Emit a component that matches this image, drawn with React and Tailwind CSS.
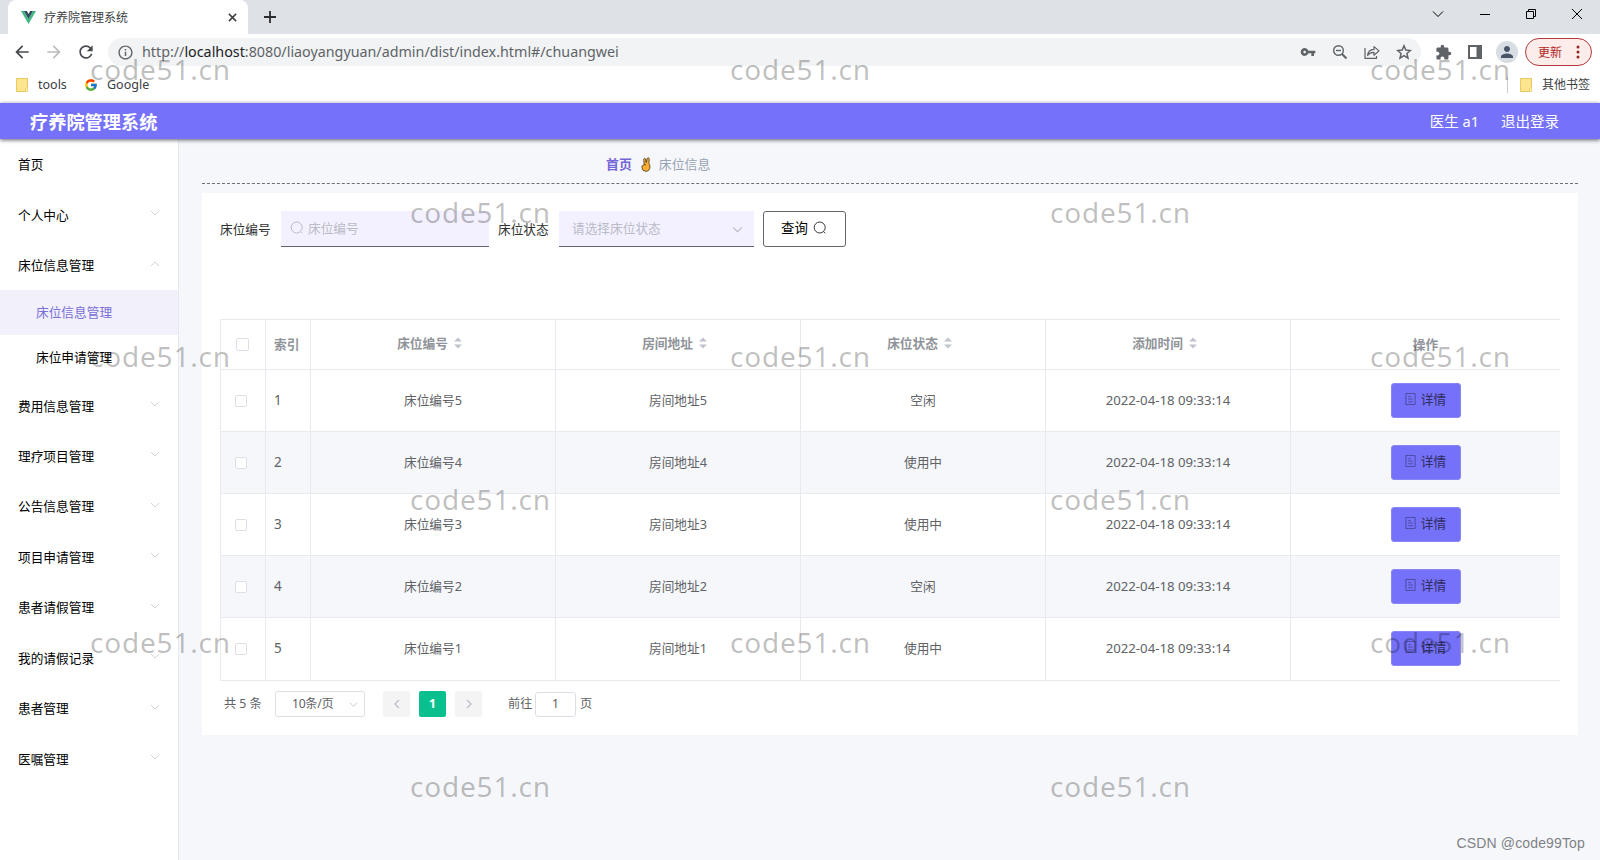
import { FcGoogle } from 'react-icons/fc'
import {
  MdArrowBack,
  MdArrowForward,
  MdExtension,
  MdInfoOutline,
  MdPerson,
  MdRefresh,
  MdVpnKey,
} from 'react-icons/md'

const menu = [
  { title: '首页' },
  { title: '个人中心', arrow: 'down' },
  { title: '床位信息管理', arrow: 'up', children: ['床位信息管理', '床位申请管理'] },
  { title: '费用信息管理', arrow: 'down' },
  { title: '理疗项目管理', arrow: 'down' },
  { title: '公告信息管理', arrow: 'down' },
  { title: '项目申请管理', arrow: 'down' },
  { title: '患者请假管理', arrow: 'down' },
  { title: '我的请假记录', arrow: 'down' },
  { title: '患者管理', arrow: 'down' },
  { title: '医嘱管理', arrow: 'down' },
]

const columns = ['床位编号', '房间地址', '床位状态', '添加时间']

const rows = [
  { bed: '床位编号5', room: '房间地址5', status: '空闲', time: '2022-04-18 09:33:14' },
  { bed: '床位编号4', room: '房间地址4', status: '使用中', time: '2022-04-18 09:33:14' },
  { bed: '床位编号3', room: '房间地址3', status: '使用中', time: '2022-04-18 09:33:14' },
  { bed: '床位编号2', room: '房间地址2', status: '空闲', time: '2022-04-18 09:33:14' },
  { bed: '床位编号1', room: '房间地址1', status: '使用中', time: '2022-04-18 09:33:14' },
]

const watermarks = [
  [90, 69], [730, 69], [1370, 69],
  [410, 212], [1050, 212],
  [90, 356], [730, 356], [1370, 356],
  [410, 499], [1050, 499],
  [90, 642], [730, 642], [1370, 642],
  [410, 786], [1050, 786],
]

function Chevron({ dir = 'down', className }) {
  const d = { down: 'M1 3l4 4 4-4', up: 'M1 7l4-4 4 4', left: 'M7 1L3 5l4 4', right: 'M3 1l4 4-4 4' }[dir]
  return (
    <svg viewBox="0 0 10 10" className={className} fill="none" stroke="currentColor">
      <path d={d} />
    </svg>
  )
}

function SearchIcon({ className }) {
  return (
    <svg viewBox="0 0 14 14" className={className} fill="none" stroke="currentColor">
      <circle cx="6.7" cy="6.5" r="5.5" />
      <path d="M10.500 10.600l1.700 1.700" />
    </svg>
  )
}

function Folder() {
  return (
    <svg viewBox="0 0 12 14" className="h-[14px] w-[12px] shrink-0">
      <path d="M.5.5h11v9l-1.5 4H.5z" fill="#ffe48f" stroke="#e9c85c" />
      <path d="M9.5 13.5v-3l2-1.5v4.5z" fill="#fff0b8" stroke="#e9c85c" strokeWidth=".7" />
    </svg>
  )
}

function TabStrip() {
  return (
    <div className="flex h-[34px] bg-[#dee1e6] pl-2">
      <div className="flex w-[240px] items-center rounded-t-lg bg-white pl-[13px] pr-[11px]">
        <svg viewBox="0 0 14 12" className="h-[13px] w-[15px]">
          <path d="M0 0h2.8L7 7.3 11.2 0H14L7 12z" fill="#41b883" />
          <path d="M2.8 0h2.6L7 2.8 8.6 0h2.6L7 7.3z" fill="#35495e" />
        </svg>
        <span className="ml-2 pt-px text-[12px] text-[#3c4043]">疗养院管理系统</span>
        <svg viewBox="0 0 10 10" className="ml-auto h-[9px] w-[9px]" stroke="#3c4043" strokeWidth="1.700">
          <path d="M1 1l8 8M9 1L1 9" />
        </svg>
      </div>
      <svg viewBox="0 0 12 12" className="ml-[16px] mt-[11px] h-3 w-3" stroke="#2b2d30" strokeWidth="1.800">
        <path d="M6 0v12M0 6h12" />
      </svg>
      <div className="ml-auto mr-[18px] flex h-[28px] items-center gap-[36px] text-black">
        <svg viewBox="0 0 12 10" className="h-[10px] w-[12px]" fill="none" stroke="currentColor">
          <path d="M1 2.5l5 5 5-5" />
        </svg>
        <svg viewBox="0 0 10 10" className="h-[10px] w-[10px]" stroke="currentColor">
          <path d="M0 5.5h10" />
        </svg>
        <svg viewBox="0 0 10 10" className="h-[10px] w-[10px]" fill="none" stroke="currentColor">
          <path d="M.5 2.5h7v7h-7zM2.5 2.5v-2h7v7h-2" />
        </svg>
        <svg viewBox="0 0 10 10" className="h-[10px] w-[10px]" stroke="currentColor">
          <path d="M0 0l10 10M10 0L0 10" />
        </svg>
      </div>
    </div>
  )
}

function Toolbar() {
  return (
    <div className="flex h-[36px] items-center pl-[12px] pr-[8px] text-[#5f6368]">
      <MdArrowBack className="h-5 w-5 text-[#45484c]" />
      <MdArrowForward className="ml-[12px] h-5 w-5 text-[#babcbe]" />
      <MdRefresh className="ml-[12px] h-5 w-5 text-[#45484c]" />
      <div className="ml-[12px] flex h-[28px] w-[1313px] items-center rounded-full bg-[#f1f3f4] pl-[9px] pr-[9px]">
        <MdInfoOutline className="h-[17px] w-[17px]" />
        <span className="ml-[8px] text-[14.3px] leading-[20px]">
          http://<span className="text-[#202124]">localhost</span>:8080/liaoyangyuan/admin/dist/index.html#/chuangwei
        </span>
        <div className="ml-auto flex items-center gap-[16px]">
          <MdVpnKey className="h-4 w-4" />
          <svg viewBox="0 0 16 16" className="h-4 w-4" fill="none" stroke="currentColor" strokeWidth="1.400">
            <circle cx="6.500" cy="6.500" r="4.800" />
            <path d="M4 6.500h5" />
            <path d="M10 10l4.500 4.500" strokeWidth="2" />
          </svg>
          <svg viewBox="0 0 16 16" className="h-4 w-4" fill="none" stroke="currentColor" strokeWidth="1.200">
            <path d="M1 4v10.400h11.500V12" />
            <path d="M3.600 11.500C4 7.500 6.300 5.600 10 5.400V2.600l5 4.300-5 4.300V8.400c-3-.1-4.800.8-6.400 3.100z" strokeLinejoin="round" />
          </svg>
          <svg viewBox="0 0 16 16" className="h-4 w-4" fill="none" stroke="currentColor" strokeWidth="1.500">
            <path d="M8 1.800l1.800 4.300 4.600.4-3.500 3 1.100 4.600L8 11.700l-4 2.400 1.100-4.600-3.500-3 4.600-.4z" />
          </svg>
        </div>
      </div>
      <MdExtension className="ml-[14px] h-[17px] w-[17px]" />
      <svg viewBox="0 0 14 14" className="ml-[16px] h-[14px] w-[14px]">
        <path d="M0 0h14v14H0zM2 2v10h6.500V2z" fill="currentColor" fillRule="evenodd" />
      </svg>
      <div className="ml-[14px] flex h-[22px] w-[22px] items-center justify-center rounded-full bg-[#d8dde4]">
        <MdPerson className="h-[18px] w-[18px] text-[#4a5468]" />
      </div>
      <div className="ml-auto flex h-[28px] w-[67px] items-center rounded-full border border-[#b3383a] bg-[#fcecea] pl-[12px] pr-[11px]">
        <span className="pt-px text-[12px] text-[#b3261e]">更新</span>
        <svg viewBox="0 0 4 14" className="ml-auto h-[14px] w-[4px]" fill="#8f2a26">
          <circle cx="2" cy="2" r="1.500" />
          <circle cx="2" cy="7" r="1.500" />
          <circle cx="2" cy="12" r="1.500" />
        </svg>
      </div>
    </div>
  )
}

function Bookmarks() {
  return (
    <div className="flex h-[33px] items-center pb-[3px] pl-[16px] pr-[10px] text-[12.5px] text-[#3c4043]">
      <Folder />
      <span className="ml-[10px] w-[46px]">tools</span>
      <FcGoogle className="h-[14px] w-[14px]" />
      <span className="ml-[9px]">Google</span>
      <div className="ml-auto mr-[12px] h-[16px] w-px bg-[#c8cacd]" />
      <Folder />
      <span className="ml-[10px] text-[12px]">其他书签</span>
    </div>
  )
}

function Sidebar() {
  return (
    <div className="w-[179px] shrink-0 border-r border-[#e6e8f0] bg-white text-[12.7px] text-black">
      {menu.map((m) => (
        <div key={m.title}>
          <div className="flex h-[50.45px] items-center justify-between pl-[18px] pr-[18px]">
            <span>{m.title}</span>
            {m.arrow && <Chevron dir={m.arrow} className="mb-[3px] h-[10px] w-[10px] text-[#d0d2d6]" />}
          </div>
          {m.children?.map((c, i) => (
            <div
              key={c}
              className={
                i === 0
                  ? 'flex h-[45px] items-center bg-[#f1f0fb] pb-[2px] pl-[36px] text-[#7a6fd8]'
                  : 'flex h-[45px] items-center pb-px pl-[36px]'
              }
            >
              {c}
            </div>
          ))}
        </div>
      ))}
    </div>
  )
}

function SearchForm() {
  return (
    <div className="flex h-[36px] items-center text-[12.7px] text-[#303133]">
      <span className="w-[61px] pb-px">床位编号</span>
      <div className="flex h-[36px] w-[208px] items-center border-b border-[#62646b] bg-[#f3f1ff] pb-px pl-[9px] text-[#b9bbc6]">
        <SearchIcon className="h-[14px] w-[14px]" />
        <span className="ml-[4px]">床位编号</span>
      </div>
      <span className="ml-[9px] w-[61px] pb-px">床位状态</span>
      <div className="flex h-[36px] w-[195px] items-center justify-between border-b border-[#62646b] bg-[#f3f1ff] pb-px pl-[13px] pr-[11px] text-[#b9bbc6]">
        <span>请选择床位状态</span>
        <Chevron className="mt-[2px] h-[11px] w-[11px]" />
      </div>
      <button className="ml-[9px] flex h-[36px] w-[83px] items-center rounded-[3px] border border-[#666] pb-[2px] pl-[17px] text-[13.4px] text-black">
        查询
        <SearchIcon className="ml-[5px] h-[14px] w-[14px] text-[#333]" />
      </button>
    </div>
  )
}

function Sorter() {
  return (
    <svg viewBox="0 0 8 12" className="ml-[6px] h-[12px] w-[8px]" fill="#c0c4cc">
      <path d="M0 4.500L4 .5l4 4zM0 7.500l4 4 4-4z" />
    </svg>
  )
}

function BedTable() {
  return (
    <div className="mt-[72px] border-l border-t border-[#e8eaf0] text-[12.7px]">
      <div className="grid h-[50px] grid-cols-[45px_45px_245px_245px_245px_245px_1fr] border-b border-[#e8eaf0] font-bold text-[#909399]">
        <div className="flex items-center border-r border-[#e8eaf0] pl-[15px]">
          <span className="h-[13px] w-[13px] rounded-[2px] border border-[#dcdfe6] bg-white" />
        </div>
        <div className="flex items-center border-r border-[#e8eaf0] pb-[2px] pl-[8px]">索引</div>
        {columns.map((c) => (
          <div key={c} className="flex items-center justify-center border-r border-[#e8eaf0] pb-[3px] pr-[7px]">
            {c}
            <Sorter />
          </div>
        ))}
        <div className="flex items-center justify-center pb-[2px]">操作</div>
      </div>
      {rows.map((r, i) => (
        <div
          key={r.bed}
          className="grid h-[62px] grid-cols-[45px_45px_245px_245px_245px_245px_1fr] border-b border-[#e8eaf0] text-[#606266] last:h-[63px] even:bg-white odd:bg-[#f5f7fb]"
        >
          <div className="flex items-center border-r border-[#e8eaf0] pl-[14px]">
            <span className="h-[12px] w-[12px] rounded-[2px] border border-[#dcdfe6] bg-white" />
          </div>
          <div className="flex items-center border-r border-[#e8eaf0] pb-[2px] pl-[8px] text-[13.5px]">{i + 1}</div>
          <div className="flex items-center justify-center border-r border-[#e8eaf0] pb-[2px]">{r.bed}</div>
          <div className="flex items-center justify-center border-r border-[#e8eaf0] pb-[2px]">{r.room}</div>
          <div className="flex items-center justify-center border-r border-[#e8eaf0] pb-[2px]">{r.status}</div>
          <div className="flex items-center justify-center border-r border-[#e8eaf0] pb-[2px] text-[13.2px]">{r.time}</div>
          <div className="flex items-center justify-center pb-px">
            <button className="flex h-[35px] w-[70px] items-center justify-center rounded-[3px] border border-[#8a87f5] bg-[#7571f9] pb-[3px] text-[12.7px] text-[#2f2d62]">
              <svg viewBox="0 0 11 13" className="mr-[5px] h-[12px] w-[11px]" fill="none" stroke="currentColor" strokeWidth=".6">
                <path d="M.5.5h10v12H.5zM3 4h3M3 6.500h5M3 9.500h5" />
              </svg>
              详情
            </button>
          </div>
        </div>
      ))}
    </div>
  )
}

function Pagination() {
  return (
    <div className="mt-[10px] flex h-[26px] items-center pl-[4px] text-[12.2px] text-[#606266]">
      <span className="w-[51px]">共 5 条</span>
      <div className="flex h-[26px] w-[90px] items-center justify-between rounded-[3px] border border-[#dcdfe6] pl-[16px] pr-[6px]">
        <span className="tracking-[-0.3px]">10条/页</span>
        <Chevron className="h-[9px] w-[9px] text-[#c0c4cc]" />
      </div>
      <div className="ml-[18px] flex h-[26px] w-[27px] items-center justify-center rounded-[2px] bg-[#f4f4f5] text-[#c0c4cc]">
        <Chevron dir="left" className="h-[10px] w-[10px] stroke-[1.500]" />
      </div>
      <div className="ml-[9px] flex h-[26px] w-[27px] items-center justify-center rounded-[2px] bg-[#0bc08f] font-bold text-white">1</div>
      <div className="ml-[9px] flex h-[26px] w-[27px] items-center justify-center rounded-[2px] bg-[#f4f4f5] text-[#c0c4cc]">
        <Chevron dir="right" className="h-[10px] w-[10px] stroke-[1.500]" />
      </div>
      <span className="ml-[26px] w-[27px]">前往</span>
      <div className="flex h-[25px] w-[41px] items-center justify-center rounded-[3px] border border-[#dcdfe6]">1</div>
      <span className="ml-[4px]">页</span>
    </div>
  )
}

export default function App() {
  return (
    <div className="relative flex h-[860px] w-[1600px] flex-col overflow-hidden whitespace-nowrap bg-white font-['Noto_Sans','Noto_Sans_CJK_SC',sans-serif] leading-[18px]">
      <TabStrip />
      <Toolbar />
      <Bookmarks />

      <header className="z-10 flex h-[36px] shrink-0 items-center bg-[#7571f9] pl-[30px] pr-[41px] text-white shadow-[0_1px_4px_rgba(40,40,60,0.75)]">
        <h1 className="pt-[2px] text-[18.2px] font-bold">疗养院管理系统</h1>
        <span className="ml-auto pb-px text-[14.5px]">医生 a1</span>
        <span className="ml-[22px] pb-px text-[14.5px]">退出登录</span>
      </header>

      <div className="flex min-h-0 flex-1">
        <Sidebar />
        <main className="flex-1 bg-[#f6f7fa] pl-[23px] pr-[22px]">
          <div className="flex h-[45px] items-center border-b border-dashed border-[#6d7078] pl-[404px] pt-[6px] text-[12.9px]">
            <span className="font-bold text-[#7566d8]">首页</span>
            <svg viewBox="0 0 10 16" className="ml-[9px] mt-px h-[15px] w-[10px]" stroke="#3a2a10" strokeWidth=".8">
              <path d="M3 8L2.600 2.200Q3.400.8 4.500 2L5.200 6 6.300 1.300Q7.600.3 8.400 1.500L8.200 7l1.100 2.800Q9.300 15 5 15.300 1 15 .7 11.500L.8 9.500z" fill="#fbb034" />
              <path d="M3 8l2 .6" fill="none" />
            </svg>
            <span className="ml-[8px] text-[#98a3b5]">床位信息</span>
          </div>
          <section className="mt-[9px] h-[542px] bg-white pl-[18px] pr-[18px] pt-[18px]">
            <SearchForm />
            <BedTable />
            <Pagination />
          </section>
        </main>
      </div>

      {watermarks.map(([x, y]) => (
        <span
          key={`${x}-${y}`}
          className="pointer-events-none absolute z-20 -translate-y-1/2 text-[28px] leading-[36px] tracking-[0.8px] text-black/25"
          style={{ left: x, top: y }}
        >
          code51.cn
        </span>
      ))}
      <span className="absolute bottom-[8px] right-[15px] z-20 text-[14px] tracking-[0.15px] text-[#808287] font-['Liberation_Sans',sans-serif]">
        CSDN @code99Top
      </span>
    </div>
  )
}
